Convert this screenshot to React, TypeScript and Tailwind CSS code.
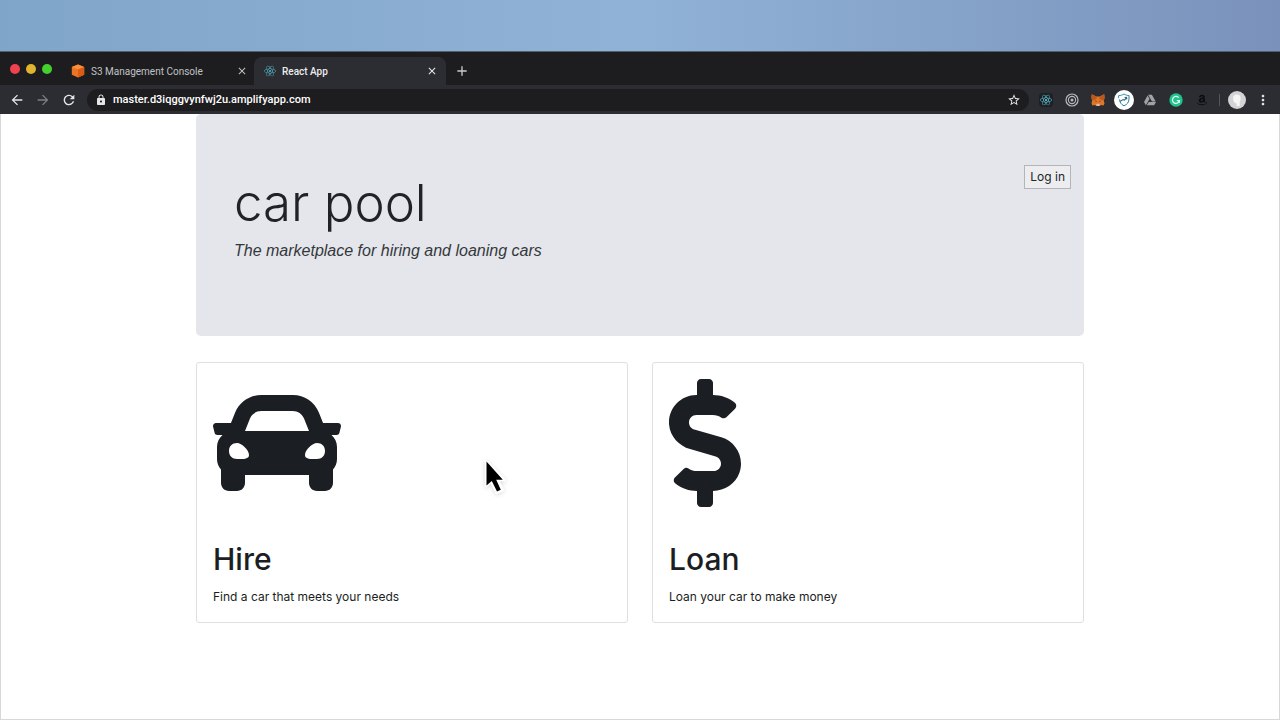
import type { ReactNode } from "react";
import { FaAmazon, FaCar, FaDollarSign, FaGoogleDrive, FaReact } from "react-icons/fa";
import { MdArrowBack, MdArrowForward, MdClose, MdLock, MdMoreVert, MdRefresh, MdStarBorder, MdAdd } from "react-icons/md";

function CubeLogo() {
  return (
    <svg viewBox="0 0 16 16" className="size-4 shrink-0" aria-hidden="true">
      <path d="M8 1.6 14.2 4v7.8L8 14.6l-6.2-2.8V4z" fill="#ee7424" />
      <path d="M8 1.6 14.2 4 8 6.6 1.8 4z" fill="#fa9038" />
      <path d="M8 6.6 14.2 4v7.8L8 14.6z" fill="#d95c17" />
    </svg>
  );
}

function TargetIcon() {
  return (
    <svg viewBox="0 0 14 14" className="size-3.5" fill="none" stroke="#b9babd" aria-hidden="true">
      <circle cx="7" cy="7" r="6" strokeWidth="1.2" />
      <circle cx="7" cy="7" r="3.6" strokeWidth="1.1" />
      <circle cx="7" cy="7" r="1.5" fill="#b9babd" stroke="none" />
    </svg>
  );
}

function FoxIcon() {
  return (
    <svg viewBox="0 0 14 14" className="size-3.5" aria-hidden="true">
      <path d="M.8 1.2 5.2 3.4h3.6l4.4-2.2.4 3.4-.8 3.2.7 2.4-.9 2.4-2.6-.7-1.5 1.2h-3L4 11.9l-2.6.7-.9-2.4.7-2.4-.8-3.2z" fill="#e17726" />
      <path d="m.8 1.2 4.4 2.2L5.8 6 1 7.6l-.6-3zM13.2 1.2 8.8 3.4 8.2 6 13 7.6l.6-3z" fill="#b9591f" />
      <path d="m3.4 7.6 2 .3.1 1.1zM10.6 7.6l-2 .3-.1 1.1z" fill="#233447" />
      <path d="m5.5 11.2.5-.5h2l.5.5.1 1.3-.4.5H5.8l-.4-.5z" fill="#d5bfb2" />
    </svg>
  );
}

function ShieldIcon() {
  return (
    <svg viewBox="0 0 20 20" className="size-5" fill="none" aria-hidden="true">
      <circle cx="10" cy="10" r="10" fill="#fff" />
      <path d="M5.6 9.4c.1 3 1.6 5 4.4 6.4 3.2-1.4 5-3.6 5-6.8V5.4" stroke="#2f7d95" strokeWidth="1" />
      <path d="M4.6 8.2V5.6C6.6 5.6 8.4 5 10 4c1.4 1 3 1.5 5 1.6" stroke="#3b93a8" strokeWidth="1" />
      <path d="m5.8 11.4 3.4-1.8 1.4.4 2-2.4M10.6 7.6l2-.2.2 2" stroke="#2b6f8a" strokeWidth="1.1" />
    </svg>
  );
}

function GrammarIcon() {
  return (
    <svg viewBox="0 0 14 14" className="size-3.5" fill="none" aria-hidden="true">
      <circle cx="7" cy="7" r="6.7" fill="#1fc58d" />
      <path d="M9.6 4.6A3.5 3.5 0 1 0 10.4 7.6H7.8M10.4 7.4v2.4" stroke="#e9fff6" strokeWidth="1.2" />
    </svg>
  );
}

function AvatarIcon() {
  return (
    <svg viewBox="0 0 18 18" className="size-[18px]" aria-hidden="true">
      <circle cx="9" cy="9" r="9" fill="#d3d3d5" />
      <path d="M5 7.2a3.8 3.8 0 0 1 7.6 0c0 1.7-.3 2.8-.9 3.7v4.2H8.6v-2.6C6.2 12 5 9.8 5 7.2z" fill="#f5f5f5" />
    </svg>
  );
}

function Pointer() {
  return (
    <svg viewBox="0 0 24 40" className="absolute left-[484px] top-[458px] h-10 w-6 drop-shadow-sm" aria-hidden="true">
      <path
        d="M2 3v25l5.2-4.5 5.3 11.300 6.300-2.800-5-9.800h6.800z"
        fill="#fff"
        stroke="#fff"
        strokeWidth="2.5"
        strokeLinejoin="round"
      />
      <path d="M2.500 3.500v24l5.300-4.600 5.200 10.600 3.800-1.700-4.600-10h6.600z" fill="#000" />
    </svg>
  );
}

function IconButton({ label, className = "", children }: { label: string; className?: string; children: ReactNode }) {
  return (
    <button type="button" aria-label={label} className={`flex shrink-0 items-center justify-center ${className}`}>
      {children}
    </button>
  );
}

function TabStrip() {
  return (
    <div className="flex h-[33px] items-end bg-[#1d1d1f] text-[10px]">
      <div className="flex h-[33px] w-[62px] items-center gap-1.5 pl-2.5">
        <span className="size-2.5 rounded-full bg-[#f0414f]" />
        <span className="size-2.5 rounded-full bg-[#e0b42e]" />
        <span className="size-2.5 rounded-full bg-[#45d02e]" />
      </div>
      <div className="flex h-7 w-48 items-center gap-[5px] pl-2 pr-1.5 text-[#c0c1c4]">
        <CubeLogo />
        <span className="grow">S3 Management Console</span>
        <IconButton label="Close S3 Management Console" className="size-3">
          <MdClose className="size-3" />
        </IconButton>
      </div>
      <div className="flex h-7 w-48 items-center gap-1.5 rounded-t-lg bg-[#2c2d32] pl-2.5 pr-2 font-medium text-[#ececee]">
        <FaReact className="size-3 text-[#4fa9b8]" />
        <span className="grow">React App</span>
        <IconButton label="Close React App" className="size-3">
          <MdClose className="size-3" />
        </IconButton>
      </div>
      <IconButton label="New tab" className="ml-2 h-7 w-4 text-[#c9cacd]">
        <MdAdd className="size-4" />
      </IconButton>
    </div>
  );
}

function Toolbar() {
  return (
    <div className="flex h-[29px] items-center bg-[#2c2d32] text-[#e6e6e8]">
      <div className="flex w-[87px] items-center gap-2.5 pl-[9px]">
        <IconButton label="Back">
          <MdArrowBack className="size-4" />
        </IconButton>
        <IconButton label="Forward" className="text-[#7d7e82]">
          <MdArrowForward className="size-4" />
        </IconButton>
        <IconButton label="Reload">
          <MdRefresh className="size-4" />
        </IconButton>
      </div>
      <div className="flex h-[22px] grow items-center gap-1.5 rounded-full bg-[#1d1d1f] px-2">
        <MdLock className="size-3 shrink-0" />
        <input
          aria-label="Address"
          defaultValue="master.d3iqggvynfwj2u.amplifyapp.com"
          className="min-w-0 grow bg-transparent text-[11px] font-medium leading-4 text-white outline-none"
        />
        <IconButton label="Bookmark this page">
          <MdStarBorder className="size-3.5" />
        </IconButton>
      </div>
      <div className="flex items-center px-1">
        <IconButton label="React Developer Tools" className="w-[26px] text-[#5cc3d6]">
          <span className="flex size-3.5 items-center justify-center rounded-sm bg-[#1d1f24]">
            <FaReact className="size-3" />
          </span>
        </IconButton>
        <IconButton label="Target" className="w-[26px]">
          <TargetIcon />
        </IconButton>
        <IconButton label="Wallet" className="w-[26px]">
          <FoxIcon />
        </IconButton>
        <IconButton label="Shield" className="w-[26px]">
          <ShieldIcon />
        </IconButton>
        <IconButton label="Drive" className="w-[26px] text-[#a2a2a4]">
          <FaGoogleDrive className="size-3" />
        </IconButton>
        <IconButton label="Grammar" className="w-[26px]">
          <GrammarIcon />
        </IconButton>
        <IconButton label="Amazon" className="w-[26px] text-[#0c0c10]">
          <FaAmazon className="size-3" />
        </IconButton>
        <span className="mx-1 h-3 w-px bg-[#55565a]" />
        <IconButton label="Profile" className="w-[26px]">
          <AvatarIcon />
        </IconButton>
        <IconButton label="More" className="w-[26px]">
          <MdMoreVert className="size-4" />
        </IconButton>
      </div>
    </div>
  );
}

function ChoiceCard({ icon, title, text }: { icon: ReactNode; title: string; text: string }) {
  return (
    <section className="rounded-[3px] border border-[#dfdfdf] p-4 pb-[15px] text-[#1b1e22]">
      <div className="flex h-32">{icon}</div>
      <h2 className="mt-8 text-[30px] font-medium leading-10">{title}</h2>
      <p className="mt-2 text-xs leading-5">{text}</p>
    </section>
  );
}

export default function App() {
  return (
    <div className="relative flex min-h-screen flex-col bg-white font-[Inter,sans-serif] text-[#212529]">
      <div className="h-[52px] border-b border-[#4f6170] bg-linear-to-r from-[#7fa5c8] via-[#90b2d6] to-[#7a92bb]" />
      <header className="font-[Roboto,sans-serif]">
        <TabStrip />
        <Toolbar />
      </header>
      <main className="grow border-x border-b border-[#d8d8d8]">
        <div className="mx-auto max-w-[888px]">
          <div className="flex items-start justify-between rounded-[5px] bg-[#e5e6eb] pb-[73px] pl-[38px] pr-[13px] pt-[51px]">
            <div className="pt-2">
              <h1 className="text-[51px] font-light leading-[60px] text-[#1f2226]">car pool</h1>
              <p className="mt-1.5 font-['Liberation_Sans',sans-serif] text-base italic leading-6 text-[#34383c]">
                The marketplace for hiring and loaning cars
              </p>
            </div>
            <button type="button" className="h-6 border border-[#b4b5b9] bg-[#ededf0] px-[5px] text-xs leading-5">
              Log in
            </button>
          </div>
          <div className="mt-[26px] grid grid-cols-2 gap-6">
            <ChoiceCard icon={<FaCar className="size-32" />} title="Hire" text="Find a car that meets your needs" />
            <ChoiceCard icon={<FaDollarSign className="h-32 w-[72px]" />} title="Loan" text="Loan your car to make money" />
          </div>
        </div>
      </main>
      <Pointer />
    </div>
  );
}
